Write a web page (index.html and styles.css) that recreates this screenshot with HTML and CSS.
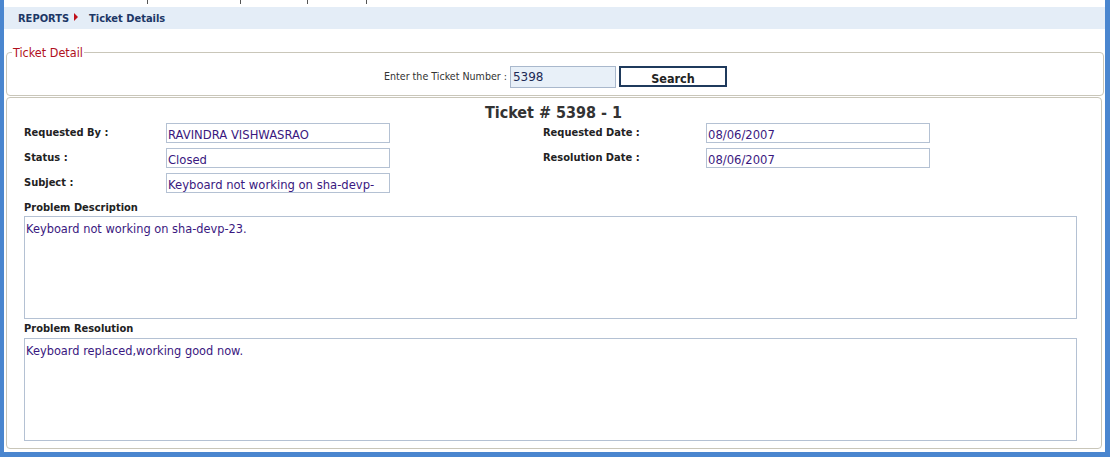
FILE: index.html
```html
<!DOCTYPE html>
<html>
<head>
<meta charset="utf-8">
<link rel="stylesheet" href="styles.css">
</head>
<body>
<div class="frame">
  <div class="topstrip">
    <span class="tick t1"></span><span class="tick t2"></span><span class="tick t3"></span><span class="tick t4"></span>
  </div>
  <div class="crumbs">
    <span class="crumb">REPORTS</span>
    <span class="arrow"></span>
    <span class="crumb">Ticket Details</span>
  </div>
  <fieldset class="box search-box">
    <legend class="legend">Ticket Detail</legend>
    <div class="search-row">
      <span class="search-label">Enter the Ticket Number :</span>
      <div class="search-input">5398</div>
      <div class="search-btn">Search</div>
    </div>
  </fieldset>
  <fieldset class="box detail-box">
    <div class="title">Ticket # 5398 - 1</div>
    <div class="grid">
      <div class="lbl">Requested By :</div>
      <div class="field">RAVINDRA VISHWASRAO</div>
      <div></div>
      <div class="lbl">Requested Date :</div>
      <div class="field">08/06/2007</div>

      <div class="lbl">Status :</div>
      <div class="field">Closed</div>
      <div></div>
      <div class="lbl">Resolution Date :</div>
      <div class="field">08/06/2007</div>

      <div class="lbl">Subject :</div>
      <div class="field">Keyboard not working on sha-devp-</div>
    </div>
    <div class="sec-lbl first">Problem Description</div>
    <div class="area">Keyboard not working on sha-devp-23.</div>
    <div class="sec-lbl">Problem Resolution</div>
    <div class="area">Keyboard replaced,working good now.</div>
  </fieldset>
</div>
</body>
</html>
```
FILE: styles.css
```css
html, body {
  margin: 0;
  padding: 0;
  background: #ffffff;
}
.frame {
  width: 1110px;
  height: 457px;
  box-sizing: border-box;
  border-left: 4px solid #4a86cf;
  border-right: 5px solid #4a86cf;
  border-bottom: 5px solid #4a86cf;
  display: flex;
  flex-direction: column;
  overflow: hidden;
}
.topstrip {
  height: 7px;
  position: relative;
  background: #ffffff;
}
.tick {
  position: absolute;
  top: 0;
  width: 1px;
  height: 4px;
  background: #555;
}
.t1 { left: 143px; }
.t2 { left: 236px; }
.t3 { left: 303px; }
.t4 { left: 362px; }
.crumbs {
  height: 22px;
  background: #e4edf7;
  display: flex;
  align-items: center;
  padding-left: 14px;
  padding-top: 1px;
  box-sizing: border-box;
  font-family: "DejaVu Sans Condensed", "DejaVu Sans", sans-serif;
  font-weight: bold;
  font-size: 11px;
  color: #1c3766;
}
.arrow {
  width: 0;
  height: 0;
  border-top: 4px solid transparent;
  border-bottom: 4px solid transparent;
  border-left: 4px solid #c0101a;
  margin: 0 11px 4px 5px;
}
.box {
  border: 1px solid #c9c6b9;
  border-radius: 4px;
  margin: 0 1px 0 2px;
  padding: 0;
  min-width: 0;
}
.search-box {
  margin-top: 17px;
  padding: 7px 0 7px 0;
}
.legend {
  padding: 0 1px;
  margin-left: 5px;
  font-family: "DejaVu Sans Condensed", "DejaVu Sans", sans-serif;
  font-size: 12.5px;
  line-height: 13px;
  color: #b0101c;
}
.search-row {
  display: flex;
  align-items: center;
  padding-left: 377px;
}
.search-label {
  font-family: "DejaVu Sans Condensed", "DejaVu Sans", sans-serif;
  font-size: 10.6px;
  color: #333;
  margin-right: 3px;
  margin-top: -2px;
}
.search-input {
  width: 102px;
  height: 20px;
  border: 1px solid #a9b8cc;
  background: #e8f0f8;
  font-family: "DejaVu Sans", sans-serif;
  font-size: 12px;
  line-height: 20px;
  padding-left: 2px;
  color: #1c2a55;
}
.search-btn {
  width: 104px;
  height: 17px;
  margin-left: 3px;
  margin-top: -1px;
  border: 2px solid #1f3a5c;
  font-family: "DejaVu Sans Condensed", "DejaVu Sans", sans-serif;
  font-weight: bold;
  font-size: 12.5px;
  line-height: 21px;
  text-align: center;
  color: #222;
}
.detail-box {
  flex: 1;
  margin-top: 1px;
  margin-bottom: 3px;
  margin-right: 3px;
  padding: 6px 24px 0 17px;
}
.title {
  text-align: center;
  font-family: "DejaVu Sans Condensed", "DejaVu Sans", sans-serif;
  font-weight: bold;
  font-size: 16px;
  line-height: 18px;
  color: #333;
  padding-left: 6px;
}
.grid {
  display: grid;
  grid-template-columns: 142px 224px 153px 163px 224px;
  grid-auto-rows: 20px;
  row-gap: 5px;
  align-items: center;
  margin-top: 1px;
}
.lbl {
  font-family: "DejaVu Sans Condensed", "DejaVu Sans", sans-serif;
  font-weight: bold;
  font-size: 11px;
  color: #222;
  margin-top: -2px;
}
.field {
  box-sizing: border-box;
  height: 20px;
  border: 1px solid #b4c1d3;
  font-family: "DejaVu Sans", sans-serif;
  font-size: 11.6px;
  line-height: 23px;
  padding-left: 1px;
  color: #3a1880;
  white-space: nowrap;
  overflow: hidden;
}
.sec-lbl {
  font-family: "DejaVu Sans Condensed", "DejaVu Sans", sans-serif;
  font-weight: bold;
  font-size: 11px;
  line-height: 14px;
  color: #222;
  margin-top: 3px;
  margin-bottom: 2px;
}
.sec-lbl.first {
  margin-top: 8px;
  margin-bottom: 1px;
}
.area {
  height: 103px;
  box-sizing: border-box;
  border: 1px solid #b4c1d3;
  font-family: "DejaVu Sans", sans-serif;
  font-size: 11.4px;
  line-height: 14px;
  padding: 5px 1px;
  color: #3a1880;
}
```
